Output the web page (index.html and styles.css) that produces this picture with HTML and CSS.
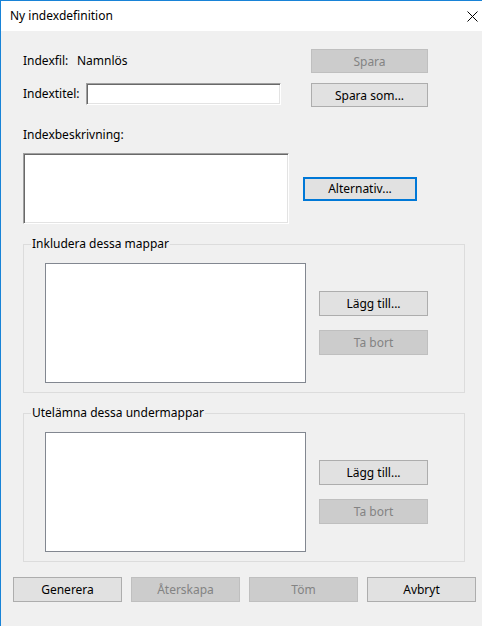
FILE: index.html
```html
<!DOCTYPE html>
<html>
<head>
    <title>Ny indexdefinition</title>
    <meta charset="UTF-8" />
    <link rel="stylesheet" href="styles.css">
</head>
<body>
    <div id="dialog">
        <div class="titlebar">
            <span class="caption">Ny indexdefinition</span>
            <svg class="close" width="11" height="11" viewBox="0 0 11 11">
                <path d="M0.5 0.5 L10.5 10.5 M10.5 0.5 L0.5 10.5" stroke="#000" stroke-width="1" fill="none"/>
            </svg>
        </div>
        <div class="content">
            <div class="top">
                <div class="row rowFile">
                    <div class="left">
                        <span class="label fileLabel">Indexfil:</span>
                        <span class="label">Namnlös</span>
                    </div>
                    <button class="button wide disabled">Spara</button>
                </div>
                <div class="row rowTitle">
                    <div class="left">
                        <span class="label titleLabel">Indextitel:</span>
                        <input class="textbox" type="text"/>
                    </div>
                    <button class="button wide saveAs">Spara som...</button>
                </div>
                <div class="label descLabel">Indexbeskrivning:</div>
                <div class="row rowDesc">
                    <textarea class="textarea"></textarea>
                    <button class="button options">Alternativ...</button>
                </div>
            </div>

            <fieldset class="group">
                <legend>Inkludera dessa mappar</legend>
                <div class="groupBody">
                    <div class="listbox"></div>
                    <div class="buttonColumn">
                        <button class="button">Lägg till...</button>
                        <button class="button disabled">Ta bort</button>
                    </div>
                </div>
            </fieldset>

            <fieldset class="group second">
                <legend>Utelämna dessa undermappar</legend>
                <div class="groupBody">
                    <div class="listbox"></div>
                    <div class="buttonColumn">
                        <button class="button">Lägg till...</button>
                        <button class="button disabled">Ta bort</button>
                    </div>
                </div>
            </fieldset>

            <div class="footer">
                <button class="button">Generera</button>
                <button class="button disabled">Återskapa</button>
                <button class="button disabled">Töm</button>
                <button class="button">Avbryt</button>
            </div>
        </div>
    </div>
</body>
</html>
```

FILE: styles.css
```css
html, body
{
    margin: 0;
    padding: 0;
}

body
{
    width: 482px;
    height: 626px;
    overflow: hidden;
    font-family: "Noto Sans", "Open Sans", sans-serif;
    font-size: 12px;
    color: #000;
    background-color: #f0f0f0;
}

#dialog
{
    height: 625px;
    border-top: 1px solid #1883d7;
    border-left: 1px solid #1883d7;
    background-color: #f0f0f0;
}

.titlebar
{
    height: 30px;
    background-color: #fff;
    display: flex;
    align-items: center;
    padding-left: 9px;
}

.titlebar .caption
{
    flex: 1;
    font-size: 12px;
    line-height: 16px;
}

.titlebar .close
{
    margin-right: 4px;
    margin-top: 0px;
}

.content
{
    padding-left: 12px;
}

.top
{
    padding-left: 10px;
}

.row
{
    display: flex;
}

.left
{
    width: 288px;
    display: flex;
    align-items: center;
}

.label
{
    line-height: 16px;
    white-space: nowrap;
}

.rowFile
{
    margin-top: 18px;
    height: 24px;
    align-items: center;
}

.fileLabel
{
    width: 54px;
}

.rowTitle
{
    margin-top: 10px;
    align-items: flex-start;
}

.rowTitle .left
{
    height: 22px;
}

.titleLabel
{
    width: 63px;
}

.textbox, .textarea
{
    box-sizing: border-box;
    margin: 0;
    padding: 0;
    background-color: #fff;
    border: 1px solid;
    border-color: #a0a0a0 #fff #fff #a0a0a0;
    box-shadow: inset 1px 1px 0 #696969, inset -1px -1px 0 #e3e3e3;
    outline: none;
    resize: none;
}

.textbox
{
    width: 195px;
    height: 22px;
}

.saveAs
{
    margin-top: 5px;
}

.descLabel
{
    margin-top: 20px;
}

.rowDesc
{
    margin-top: 10px;
    align-items: center;
}

.textarea
{
    display: block;
    width: 266px;
    height: 71px;
    font-family: inherit;
}

.button
{
    box-sizing: border-box;
    width: 109px;
    height: 25px;
    margin: 0;
    padding: 0;
    font-family: inherit;
    font-size: 12px;
    color: #000;
    background-color: #e1e1e1;
    border: 1px solid #adadad;
}

.button.wide
{
    width: 117px;
    height: 24px;
}

.button.disabled
{
    color: #838383;
    background-color: #cccccc;
    border-color: #bfbfbf;
}

.options
{
    width: 114px;
    height: 24px;
    margin-left: 14px;
    border: 2px solid #0078d7;
}

.group
{
    box-sizing: border-box;
    width: 442px;
    margin: 12px 0 0 10px;
    padding: 0 0 9px 7px;
    border: 1px solid #dcdcdc;
}

.group.second
{
    margin-top: 12px;
}

.group legend
{
    padding: 0 1px;
    line-height: 16px;
}

.groupBody
{
    display: flex;
    align-items: center;
    padding-top: 11px;
    padding-left: 14px;
}

.listbox
{
    box-sizing: border-box;
    width: 261px;
    height: 120px;
    background-color: #fff;
    border: 1px solid #828790;
}

.buttonColumn
{
    display: flex;
    flex-direction: column;
    gap: 14px;
    margin-left: 13px;
}

.footer
{
    display: flex;
    gap: 9px;
    margin-top: 15px;
}
```
